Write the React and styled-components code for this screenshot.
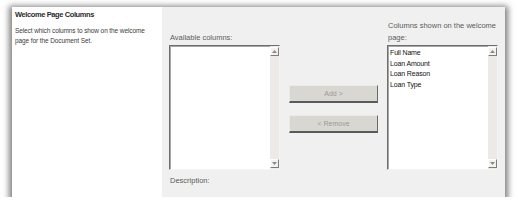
import React from 'react'
import styled, { createGlobalStyle } from 'styled-components'

const selectedColumns = ['Full Name', 'Loan Amount', 'Loan Reason', 'Loan Type']

function ListBox({ items = [] }) {
  return (
    <Box>
      <Items>
        {items.map((item) => (
          <Item key={item}>{item}</Item>
        ))}
      </Items>
      <ScrollBar>
        <Arrow>
          <svg width="5" height="3" viewBox="0 0 5 3">
            <path d="M0 3 L2.5 0 L5 3 Z" fill="#8a8a8a" />
          </svg>
        </Arrow>
        <Arrow>
          <svg width="5" height="3" viewBox="0 0 5 3">
            <path d="M0 0 L2.5 3 L5 0 Z" fill="#8a8a8a" />
          </svg>
        </Arrow>
      </ScrollBar>
    </Box>
  )
}

export default function App() {
  return (
    <>
      <GlobalStyle />
      <Frame>
        <Intro>
          <Title>Welcome Page Columns</Title>
          <Desc>
            Select which columns to show on the welcome
            <br />
            page for the Document Set.
          </Desc>
        </Intro>

        <Picker>
          <Label>Available columns:</Label>
          <span />
          <Label>
            Columns shown on the welcome
            <br />
            page:
          </Label>

          <ListBox />
          <Buttons>
            <Button disabled>Add &gt;</Button>
            <Button disabled>&lt; Remove</Button>
          </Buttons>
          <ListBox items={selectedColumns} />

          <DescLabel>Description:</DescLabel>
        </Picker>
      </Frame>
    </>
  )
}

const GlobalStyle = createGlobalStyle`
  body {
    margin: 0;
    background: #ffffff;
    font-family: "Liberation Sans", Arial, sans-serif;
  }
`

const Frame = styled.div`
  display: flex;
  width: 493px;
  height: 190px;
  margin: 7px 0 0 12px;
  box-shadow: 0 2px 6px 3px rgba(0, 0, 0, 0.5);
  background: #f0f0f0;
`

const Intro = styled.div`
  width: 151px;
  background: #ffffff;
  padding: 3px 3px;
  box-sizing: border-box;
`

const Title = styled.div`
  font-size: 7.5px;
  line-height: 10px;
  font-weight: bold;
  letter-spacing: -0.4px;
  color: #2b2b2b;
`

const Desc = styled.div`
  margin-top: 6px;
  font-size: 6.5px;
  line-height: 10px;
  letter-spacing: -0.1px;
  color: #3c3c3c;
`

const Picker = styled.div`
  flex: 1;
  display: grid;
  grid-template-columns: 111px 89px 111px;
  grid-template-rows: auto 125px auto;
  column-gap: 9px;
  align-items: end;
  align-content: start;
  padding: 13px 7px 0 7px;
`

const Label = styled.div`
  font-size: 7.5px;
  line-height: 11.5px;
  color: #5c5c5c;
  margin: 0 0 2px 1px;
`

const DescLabel = styled(Label)`
  align-self: start;
  margin-top: 5px;
`

const Box = styled.div`
  display: flex;
  height: 125px;
  box-sizing: border-box;
  background: #ffffff;
  border: 1px solid;
  border-color: #6e6e6e #f4f4f4 #f4f4f4 #6e6e6e;
  box-shadow: inset 1px 1px 0 #a6a6a6;
`

const Items = styled.div`
  flex: 1;
  padding: 2px 0 0 2px;
`

const Item = styled.div`
  font-size: 7px;
  line-height: 10.7px;
  letter-spacing: -0.15px;
  color: #111111;
`

const ScrollBar = styled.div`
  width: 9px;
  display: flex;
  flex-direction: column;
  justify-content: space-between;
  background: #ebeae6;
  padding: 1px 0 1px;
`

const Arrow = styled.div`
  width: 9px;
  height: 9px;
  box-sizing: border-box;
  display: flex;
  align-items: center;
  justify-content: center;
  background: #f3f2ee;
  border: 1px solid;
  border-color: #ffffff #7c7c7c #7c7c7c #ffffff;
`

const Buttons = styled.div`
  align-self: start;
  display: flex;
  flex-direction: column;
  gap: 12px;
  padding-top: 40px;
`

const Button = styled.button`
  height: 18px;
  padding: 0;
  font-family: "Liberation Sans", Arial, sans-serif;
  font-size: 7px;
  color: #9a9a9a;
  background: #d9d7d1;
  border: none;
  border-right: 1px solid #6a6a6a;
  border-bottom: 2px solid #5a5a5a;
  border-top: 1px solid #ebeae6;
  border-left: 1px solid #ebeae6;
`
